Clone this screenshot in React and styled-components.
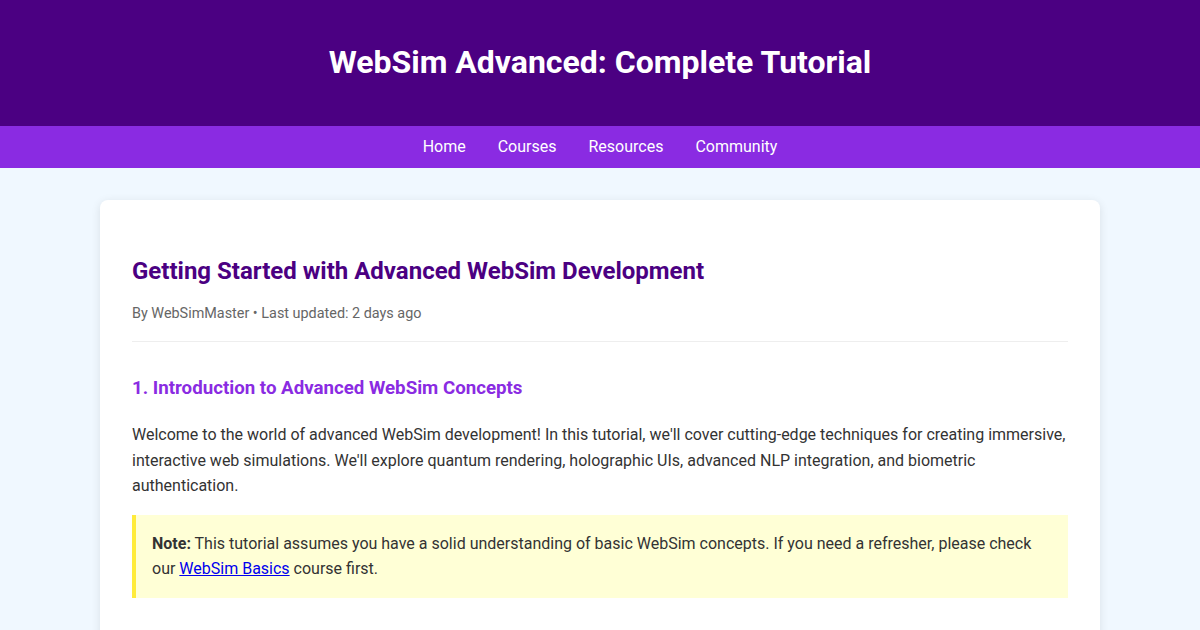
import React from "react";
import styled, { createGlobalStyle } from "styled-components";

const Global = createGlobalStyle`
  * { box-sizing: border-box; }
  body {
    margin: 0;
    font-family: Roboto, "Liberation Sans", Arial, sans-serif;
    background: #f0f8ff;
    color: #333;
    line-height: 1.6;
  }
`;

const Header = styled.header`
  background: #4b0082;
  color: #fff;
  height: 126px;
  padding-bottom: 2px;
  display: flex;
  align-items: center;
  justify-content: center;
`;

const Title = styled.h1`
  margin: 0;
  font-size: 32px;
  font-weight: 700;
  line-height: 1.2;
`;

const Nav = styled.nav`
  background: #8a2be2;
  display: flex;
  justify-content: center;
  gap: 32px;
  padding: 8px 0;
`;

const NavLink = styled.a`
  color: #fff;
  text-decoration: none;
  font-size: 16px;
  line-height: 26px;
`;

const Card = styled.main`
  max-width: 1000px;
  margin: 32px auto;
  background: #fff;
  border-radius: 8px;
  box-shadow: 0 2px 10px rgba(0, 0, 0, 0.1);
  padding: 32px;
`;

const ArticleHeader = styled.div`
  border-bottom: 1px solid #eee;
  padding-bottom: 16px;
  margin-bottom: 31px;
`;

const ArticleTitle = styled.h2`
  margin: 20px 0 12px;
  font-size: 24px;
  font-weight: 700;
  color: #4b0082;
  line-height: 38px;
`;

const Meta = styled.div`
  font-size: 14.4px;
  color: #666;
  line-height: 23px;
`;

const SectionTitle = styled.h3`
  margin: 0 0 19px;
  font-size: 18.7px;
  font-weight: 700;
  color: #8a2be2;
  line-height: 30px;
`;

const Paragraph = styled.p`
  margin: 0 0 16px;
  font-size: 16px;
  line-height: 25.6px;
`;

const Note = styled.div`
  background: #ffffd6;
  border-left: 4px solid #ffeb3b;
  padding: 16px;
  font-size: 16px;
  line-height: 25.6px;
  margin-bottom: 20px;
`;

const Link = styled.a`
  color: #0000ee;
  text-decoration: underline;
`;

export default function App() {
  return (
    <>
      <Global />
      <Header>
        <Title>WebSim Advanced: Complete Tutorial</Title>
      </Header>
      <Nav>
        <NavLink href="#">Home</NavLink>
        <NavLink href="#">Courses</NavLink>
        <NavLink href="#">Resources</NavLink>
        <NavLink href="#">Community</NavLink>
      </Nav>
      <Card>
        <ArticleHeader>
          <ArticleTitle>Getting Started with Advanced WebSim Development</ArticleTitle>
          <Meta>By WebSimMaster • Last updated: 2 days ago</Meta>
        </ArticleHeader>
        <SectionTitle>1. Introduction to Advanced WebSim Concepts</SectionTitle>
        <Paragraph>
          Welcome to the world of advanced WebSim development! In this tutorial, we'll cover
          cutting-edge techniques for creating immersive, interactive web simulations. We'll
          explore quantum rendering, holographic UIs, advanced NLP integration, and biometric
          authentication.
        </Paragraph>
        <Note>
          <strong>Note:</strong> This tutorial assumes you have a solid understanding of basic
          WebSim concepts. If you need a refresher, please check our{" "}
          <Link href="#">WebSim Basics</Link> course first.
        </Note>
      </Card>
    </>
  );
}
